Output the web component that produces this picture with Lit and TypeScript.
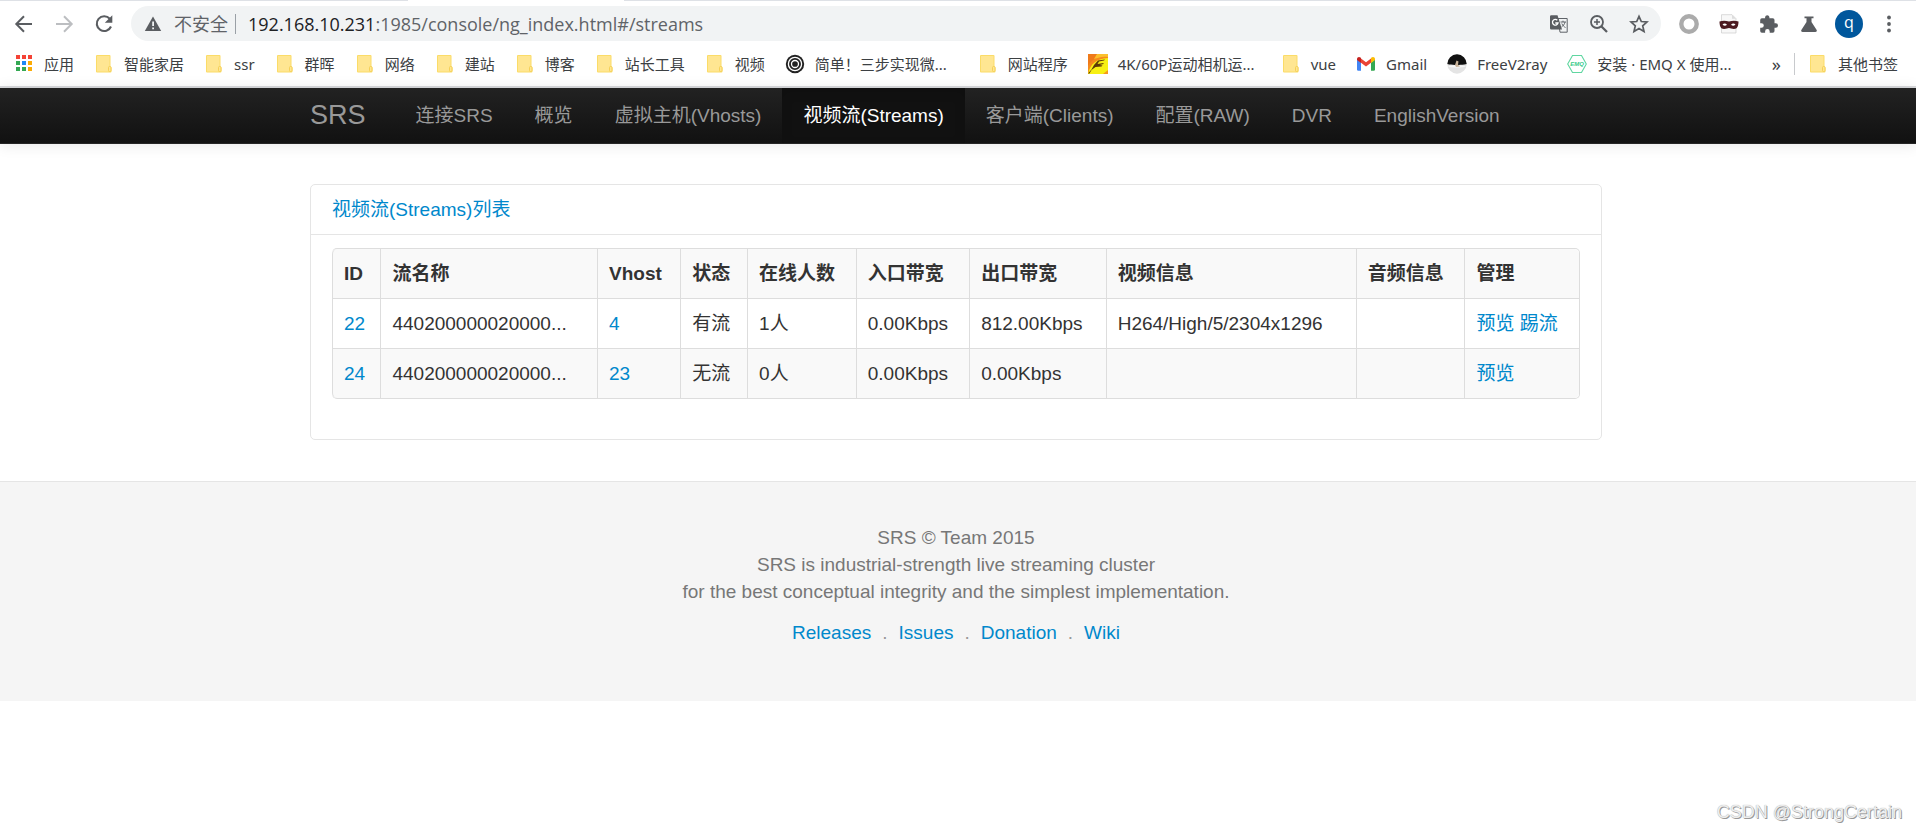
import { LitElement, html, svg, css } from "lit";
import { customElement } from "lit/decorators.js";

const glyphs: Record<string, unknown> = {
  apps: svg`
    <g fill="#f44336"><rect x="2" y="1" width="4" height="4"/><rect x="8" y="1" width="4" height="4"/><rect x="14" y="1" width="4" height="4"/></g>
    <rect x="2" y="7" width="4" height="4" fill="#34a853"/><rect x="8" y="7" width="4" height="4" fill="#1e88f5"/><rect x="14" y="7" width="4" height="4" fill="#fbab05"/>
    <rect x="2" y="13" width="4" height="4" fill="#34a853"/><rect x="8" y="13" width="4" height="4" fill="#34a853"/><rect x="14" y="13" width="4" height="4" fill="#fbab05"/>`,
  folder: svg`
    <path d="M3 1h12.500a1 1 0 0 1 1 1V12.500l1 1v4a1 1 0 0 1-1 1H3a1 1 0 0 1-1-1V2a1 1 0 0 1 1-1z" fill="#fbdc68"/>
    <path d="M3 2h12.500v15.500h-12.500z" fill="#ffe692"/>
    <rect x="14.500" y="12.500" width="2.500" height="5" rx="1" fill="#ffe692" stroke="#f5d057" stroke-width="1"/>`,
  target: svg`
    <circle cx="10" cy="10" r="9.200" fill="#222"/><circle cx="10" cy="10" r="6.600" fill="none" stroke="#fff" stroke-width="1.300"/>
    <circle cx="10" cy="10" r="3.500" fill="none" stroke="#fff" stroke-width="1.300"/>`,
  camera: svg`
    <rect width="20" height="20" fill="#f58a1d"/><path d="M0 20C2 10 8 5 20 4v16z" fill="#f7f013"/>
    <path d="M0 12C4 5 10 2 20 2V0H0z" fill="#ef7a1a"/><path d="M9 0h11v3C14 2 11 4 6 5z" fill="#fbc02d"/>
    <path d="M0 19.500l3.500-4L6 11l4-4.500 7-1-1 1-5 1-1.500 2.500 6-1v1l-4 1 3 .5-1 1-6 .5-4 3-2 3.500z" fill="#5d3a08"/><path d="M15 20l5-4v4z" fill="#f59a1d"/>`,
  gmail: svg`
    <path d="M1 5.500v10c0 .8.500 1.200 1.200 1.200H5V8.500z" fill="#4285f4"/><path d="M15 16.700h2.800c.7 0 1.200-.4 1.200-1.200v-10l-4 3z" fill="#34a853"/>
    <path d="M5 8.700l5 3.800 5-3.800V4.500l-5 3.800-5-3.800z" fill="#ea4335"/><path d="M1 5c0-2 2.200-2.600 3.500-1.500L5 4v5L1 6z" fill="#c5221f"/>
    <path d="M19 5c0-2-2.200-2.600-3.500-1.500L15 4v5l4-3z" fill="#fbbc04"/>`,
  ray: svg`
    <circle cx="10" cy="10" r="9.700" fill="#e4e4e4"/><path d="M.3 10a9.700 9.700 0 0 1 19.400 0c-3 1-6 .4-8 1L8 11c-3-.4-5 0-7.700-1z" fill="#111"/>
    <path d="M1 12c5-1 12-1 18 0-1 1-5 1.500-9 1.500S2 13 1 12z" fill="#f7f7f7"/><path d="M9.500 6.500l2 1-.5 3 2 2-4 .5-1-2z" fill="#c9b39a"/>`,
  emq: svg`
    <path d="M5.500 1.500h9L19.300 10l-4.800 8.500h-9L.7 10z" fill="#fff" stroke="#5fd6a0" stroke-width="1.100"/>
    <text x="10" y="12.300" text-anchor="middle" font-family="Liberation Sans, sans-serif" font-size="6" font-weight="bold" font-style="italic" fill="#3ccb8a">EMQ</text>`,
  back: svg`<path d="M18 10H2.500M10 2.300L2.300 10l7.700 7.700" fill="none" stroke="#5a5d61" stroke-width="2"/>`,
  forward: svg`<path d="M2 10h15.500M10 2.300l7.700 7.700-7.700 7.700" fill="none" stroke="#bcbec1" stroke-width="2"/>`,
  reload: svg`<path d="M15.800 4.800A7.400 7.400 0 1 0 17 12.500" fill="none" stroke="#5a5d61" stroke-width="2.100"/><path d="M18.300 1.300v7.500h-7.500z" fill="#5a5d61"/>`,
  warning: svg`<path d="M10 2.500l8.200 14.500H1.800z" fill="#5a5d61"/><path d="M9.200 7.500h1.800v4.500H9.200zM9.200 13.400h1.800v1.800H9.200z" fill="#f1f3f4"/>`,
  translate: svg`
    <path d="M9 4.500h9.200v13.700H11z" fill="#f1f3f4" stroke="#5f6368" stroke-width="1"/><path d="M1 2.500A1.300 1.300 0 0 1 2.300 1.200H8.500L13 15.500H2.300A1.300 1.300 0 0 1 1 14.200z" fill="#5a5d61"/>
    <path d="M8.300 6.300A2.800 2.800 0 1 0 9 9H6.300" fill="none" stroke="#fff" stroke-width="1.300"/>
    <path d="M11.500 8h5.500M14 6.700V8M16 8c-.5 2.500-2 4-3.500 5M12.800 9.500c1 2 2.200 3.300 3.700 4" fill="none" stroke="#5f6368" stroke-width="1"/>`,
  zoom: svg`<circle cx="8" cy="8" r="6" fill="none" stroke="#5a5d61" stroke-width="1.800"/><path d="M12.500 12.500l5.500 5.500" stroke="#5a5d61" stroke-width="2.300"/><path d="M5 8h6M8 5v6" stroke="#5a5d61" stroke-width="1.500"/>`,
  star: svg`<path d="M10 2.300l2.300 5.200 5.700.5-4.300 3.800 1.300 5.600-5-3-5 3 1.300-5.600L2 8l5.700-.5z" fill="none" stroke="#5a5d61" stroke-width="1.700"/>`,
  ring: svg`<circle cx="10" cy="10" r="7.700" fill="none" stroke="#ababab" stroke-width="4.400"/>`,
  mask: svg`
    <path d="M2.500.7h10.500l4 4v14.300H2.500z" fill="#f8f8f8" stroke="#ccc" stroke-width=".7"/><path d="M13 .7v4h4z" fill="#ddd"/>
    <path d="M.5 7.500c3-1 6-1 9.500 0 3.500-1 6.500-1 9.500 0 0 4-1 7.500-4.500 7.500-2.500 0-3.500-1-5-1s-2.500 1-5 1C1.500 15 .5 11.500.5 7.500z" fill="#4c1a20"/>
    <path d="M3.500 10.500c1.500-1.500 3-1.500 4.500.3-1.500 1.200-3 1.200-4.500-.3zM16.500 10.500c-1.500-1.500-3-1.500-4.500.3 1.500 1.200 3 1.200 4.500-.3z" fill="#fff"/>`,
  puzzle: svg`<path d="M16.800 9.300h-1.300V6a1.700 1.700 0 0 0-1.700-1.700h-3.400V3a2.200 2.200 0 0 0-4.300 0v1.300H2.900A1.700 1.700 0 0 0 1.200 6v3.200h1.300a2.300 2.300 0 0 1 0 4.600H1.200V17a1.700 1.700 0 0 0 1.700 1.700h3.200v-1.300a2.300 2.300 0 0 1 4.600 0v1.300h3.100a1.700 1.700 0 0 0 1.700-1.700v-3.300h1.300a2.200 2.200 0 0 0 0-4.400z" fill="#5a5d61"/>`,
  flask: svg`<path d="M5.500 2.500h9v1.800h-2v3.700l5 7.800c.8 1.200.2 2.300-1.200 2.300H3.700c-1.400 0-2-1.100-1.200-2.300l5-7.800V4.300h-2z" fill="#5a5d61"/>`,
  dots: svg`<g fill="#5a5d61"><circle cx="10" cy="3.500" r="1.900"/><circle cx="10" cy="10" r="1.900"/><circle cx="10" cy="16.500" r="1.900"/></g>`,
};

const icon = (name: string) => html`<svg class="icon" viewBox="0 0 20 20" aria-hidden="true">${glyphs[name]}</svg>`;

@customElement("browser-bar")
class BrowserBar extends LitElement {
  static styles = css`
    :host {
      display: block;
      background: #fff;
      border-bottom: 2px solid #d9dadd;
      font-family: "Open Sans", "Noto Sans CJK SC", sans-serif;
      color: #3c4043;
    }
    .tab-edge { display: flex; height: 1px; background: #dee1e6; }
    .tab-active { width: 216px; margin-left: 408px; background: #fff; }
    .icon { display: block; width: 20px; height: 20px; flex: none; }
    button { border: 0; padding: 0; background: none; font: inherit; color: inherit; display: block; }
    .toolbar { display: flex; align-items: center; height: 35px; padding: 5px 17px 0 14px; }
    .nav { display: flex; gap: 20px; margin-right: 17px; }
    .address {
      flex: 1; min-width: 0; display: flex; align-items: center; height: 35px;
      border-radius: 18px; background: #f1f3f4; padding: 0 12px; box-sizing: border-box;
      font-size: 18px; line-height: 24px; color: #5f6368; white-space: nowrap;
    }
    .unsafe { margin: 0 7px 0 11px; }
    .rule { width: 1px; height: 20px; background: #9aa0a6; margin-right: 12px; }
    .url { flex: 1; overflow: hidden; }
    .host { color: #202124; }
    .tools { display: flex; align-items: center; gap: 20px; }
    .extensions { margin-left: 18px; }
    .avatar {
      width: 28px; height: 28px; margin: 0 -4px; padding-bottom: 3px; border-radius: 50%; background: #00579c;
      color: #fff; font-size: 16px; line-height: 24px; text-align: center;
    }
    .bookmarks {
      display: flex; align-items: center; gap: 20px; height: 45px; padding: 0 18px 0 14px;
      font-family: "Noto Sans", "Noto Sans CJK SC", sans-serif; font-size: 15px; line-height: 22px; white-space: nowrap;
    }
    .mark { display: flex; align-items: center; gap: 10px; color: inherit; text-decoration: none; }
    .long { width: 143px; }
    .more { margin-left: auto; font-size: 18px; }
    .other { border-left: 1px solid #c8cacd; margin-left: -7px; padding-left: 13px; }
  `;

  private marks: [string, string][] = [
    ["apps", "应用"], ["folder", "智能家居"], ["folder", "ssr"], ["folder", "群晖"], ["folder", "网络"],
    ["folder", "建站"], ["folder", "博客"], ["folder", "站长工具"], ["folder", "视频"],
    ["target", "简单！三步实现微..."], ["folder", "网站程序"], ["camera", "4K/60P运动相机运..."],
    ["folder", "vue"], ["gmail", "Gmail"], ["ray", "FreeV2ray"], ["emq", "安装 · EMQ X 使用..."],
  ];

  render() {
    const tool = (name: string, label: string) => html`<button aria-label=${label}>${icon(name)}</button>`;
    return html`
      <div class="tab-edge"><span class="tab-active"></span></div>
      <div class="toolbar">
        <div class="nav">${tool("back", "后退")}${tool("forward", "前进")}${tool("reload", "重新加载")}</div>
        <div class="address">
          ${icon("warning")}<span class="unsafe">不安全</span><span class="rule"></span>
          <span class="url"><span class="host">192.168.10.231</span>:1985/console/ng_index.html#/streams</span>
          <div class="tools">${tool("translate", "翻译")}${tool("zoom", "缩放")}${tool("star", "收藏")}</div>
        </div>
        <div class="tools extensions">
          ${tool("ring", "扩展")}${tool("mask", "隐私")}${tool("puzzle", "扩展程序")}${tool("flask", "实验")}
          <button class="avatar">q</button>${tool("dots", "菜单")}
        </div>
      </div>
      <nav class="bookmarks">
        ${this.marks.map(([name, label]) => html`<a class="mark" href="#">${icon(name)}<span class=${label.endsWith("...") ? "long" : ""}>${label}</span></a>`)}
        <button class="more">»</button>
        <a class="mark other" href="#">${icon("folder")}<span>其他书签</span></a>
      </nav>
    `;
  }
}

interface Stream {
  id: string; name: string; vhost: string; status: string; clients: string;
  inRate: string; outRate: string; video: string; audio: string; actions: string[];
}

@customElement("app-root")
class AppRoot extends LitElement {
  static styles = css`
    :host {
      display: block; position: relative; min-height: 100vh; background: #fff; color: #333;
      font-family: "Liberation Sans", Arial, "Noto Sans CJK SC", sans-serif;
      font-size: 19px; line-height: 27px;
    }
    a { color: #0088cc; text-decoration: none; }
    .container { max-width: 1292px; margin: 0 auto; }
    .navbar {
      background: linear-gradient(#222, #111); border-bottom: 1px solid #252525;
      box-shadow: 0 1px 14px rgba(0, 0, 0, 0.1); padding-right: 4px;
    }
    .menu { display: flex; white-space: nowrap; }
    .menu a { color: #999; padding: 14px 21px; }
    .menu .brand { font-size: 27px; padding: 14px 29px 14px 0; }
    .menu .active { color: #fff; background: #111; box-shadow: inset 0 4px 11px rgba(0, 0, 0, 0.125); }
    .main { padding: 40px 4px 41px 0; }
    .group { border: 1px solid #e5e5e5; border-radius: 5px; }
    .heading { display: block; padding: 11px 21px; border-bottom: 1px solid #e5e5e5; }
    .inner { padding: 13px 21px 40px; }
    table {
      width: 100%; border-collapse: separate; border-spacing: 0;
      border: 1px solid #ddd; border-left: 0; border-radius: 5px;
    }
    th, td { height: 27px; padding: 11px; text-align: left; vertical-align: top; border-left: 1px solid #ddd; white-space: nowrap; }
    td { border-top: 1px solid #ddd; }
    .odd { background: #f9f9f9; }
    th:first-child { border-top-left-radius: 5px; }
    th:last-child { border-top-right-radius: 5px; }
    tr:last-child td:first-child { border-bottom-left-radius: 5px; }
    tr:last-child td:last-child { border-bottom-right-radius: 5px; }
    .footer {
      padding: 42px 4px 55px 0; background: #f5f5f5; border-top: 1px solid #e5e5e5;
      text-align: center; color: #777;
    }
    .footer p { margin: 0 0 14px; }
    .links { display: flex; justify-content: center; gap: 11px; margin: 0; padding: 0; list-style: none; color: #999; }
    .links li { display: flex; gap: 11px; }
    .watermark {
      position: absolute; right: 14px; bottom: 7px; font-family: "Liberation Sans", sans-serif;
      font-size: 18px; line-height: 24px; color: #eee; text-shadow: 0 0 1px #999, 1px 1px 0 #999;
    }
  `;

  private menu = ["连接SRS", "概览", "虚拟主机(Vhosts)", "视频流(Streams)", "客户端(Clients)", "配置(RAW)", "DVR", "EnglishVersion"];
  private columns = ["ID", "流名称", "Vhost", "状态", "在线人数", "入口带宽", "出口带宽", "视频信息", "音频信息", "管理"];
  private streams: Stream[] = [
    { id: "22", name: "440200000020000...", vhost: "4", status: "有流", clients: "1人", inRate: "0.00Kbps", outRate: "812.00Kbps", video: "H264/High/5/2304x1296", audio: "", actions: ["预览", "踢流"] },
    { id: "24", name: "440200000020000...", vhost: "23", status: "无流", clients: "0人", inRate: "0.00Kbps", outRate: "0.00Kbps", video: "", audio: "", actions: ["预览"] },
  ];
  private links = ["Releases", "Issues", "Donation", "Wiki"];

  render() {
    return html`
      <browser-bar></browser-bar>
      <header class="navbar">
        <nav class="container menu">
          <a class="brand" href="#">SRS</a>
          ${this.menu.map((m, i) => html`<a href="#" class=${i === 3 ? "active" : ""}>${m}</a>`)}
        </nav>
      </header>
      <main class="main">
        <div class="container">
          <section class="group">
            <a class="heading" href="#">视频流(Streams)列表</a>
            <div class="inner">
              <table>
                <thead><tr class="odd">${this.columns.map((c) => html`<th>${c}</th>`)}</tr></thead>
                <tbody>
                  ${this.streams.map((s, i) => html`
                    <tr class=${i % 2 ? "odd" : ""}>
                      <td><a href="#">${s.id}</a></td><td>${s.name}</td><td><a href="#">${s.vhost}</a></td>
                      <td>${s.status}</td><td>${s.clients}</td><td>${s.inRate}</td><td>${s.outRate}</td>
                      <td>${s.video}</td><td>${s.audio}</td>
                      <td>${s.actions.map((a) => html`<a href="#">${a}</a> `)}</td>
                    </tr>`)}
                </tbody>
              </table>
            </div>
          </section>
        </div>
      </main>
      <footer class="footer">
        <p>SRS © Team 2015<br />SRS is industrial-strength live streaming cluster<br />for the best conceptual integrity and the simplest implementation.</p>
        <ul class="links">
          ${this.links.map((l, i) => html`<li>${i ? html`<span>.</span>` : ""}<a href="#">${l}</a></li>`)}
        </ul>
      </footer>
      <div class="watermark">CSDN @StrongCertain</div>
    `;
  }
}
